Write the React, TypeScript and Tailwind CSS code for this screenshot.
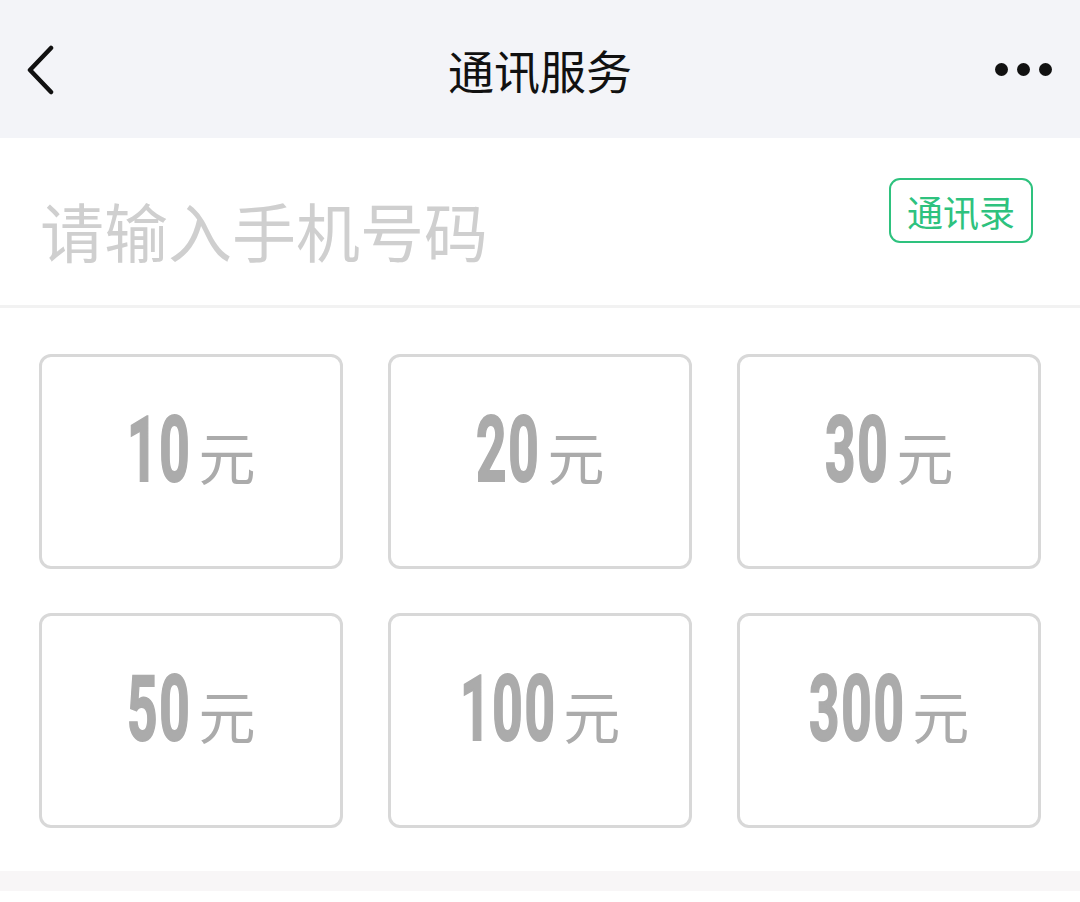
const amounts = ["10", "20", "30", "50", "100", "300"];

const cjk = "font-['Noto_Sans_CJK_SC','Noto_Sans',sans-serif]";

function AmountCard({ value }: { value: string }) {
  return (
    <div className="flex h-[215px] items-center justify-center rounded-[12px] border-[3px] border-[#d8d8d8] bg-white">
      <div className="flex items-end pb-[21px]">
        <span
          className="relative inline-block h-[90px] overflow-visible"
          style={{ width: value.length * 31.5 }}
        >
          <span className="absolute left-0 top-0 origin-left scale-x-[0.59] font-['Roboto',sans-serif] text-[90px] font-bold leading-[90px] tracking-[3px] text-[#ababab] [-webkit-text-stroke:2px_#ababab]">
            {value}
          </span>
        </span>
        <span className={`${cjk} mb-[10px] ml-[9px] text-[57px] leading-[62px] text-[#ababab]`}>
          元
        </span>
      </div>
    </div>
  );
}

export default function App() {
  return (
    <div className={`h-[902px] w-[1080px] overflow-hidden bg-white ${cjk}`}>
      {/* 顶部导航 */}
      <div className="grid h-[138px] grid-cols-[1fr_auto_1fr] items-center bg-[#f3f4f8] px-[24px]">
        <svg width="34" height="50" viewBox="0 0 34 50" className="mt-[2px]">
          <polyline
            points="27,3 6,25 27,47"
            fill="none"
            stroke="#111"
            strokeWidth="4.5"
            strokeLinecap="round"
            strokeLinejoin="round"
          />
        </svg>
        <h1 className="text-[46px] leading-none text-[#111]">通讯服务</h1>
        <div className="mr-[4px] flex justify-end gap-[9px]">
          <span className="h-[13px] w-[13px] rounded-full bg-[#111]" />
          <span className="h-[13px] w-[13px] rounded-full bg-[#111]" />
          <span className="h-[13px] w-[13px] rounded-full bg-[#111]" />
        </div>
      </div>

      {/* 手机号输入 */}
      <div className="flex h-[170px] items-start justify-between border-b-[3px] border-[#f2f2f2] pl-[40px] pr-[47px]">
        <input
          type="tel"
          placeholder="请输入手机号码"
          className="mt-[51px] w-[640px] bg-transparent text-[64px] leading-[80px] text-[#333] outline-none placeholder:text-[#cfcfcf]"
        />
        <button className="mt-[40px] flex h-[65px] w-[144px] items-center justify-center rounded-[11px] border-[2px] border-[#2ec27e] text-[36px] text-[#2ec27e]">
          通讯录
        </button>
      </div>

      {/* 金额选择 */}
      <div className="grid grid-cols-3 gap-x-[45px] gap-y-[44px] px-[39px] pb-[43px] pt-[46px]">
        {amounts.map((a) => (
          <AmountCard key={a} value={a} />
        ))}
      </div>

      <div className="h-[20px] bg-[#f8f6f7]" />
    </div>
  );
}
